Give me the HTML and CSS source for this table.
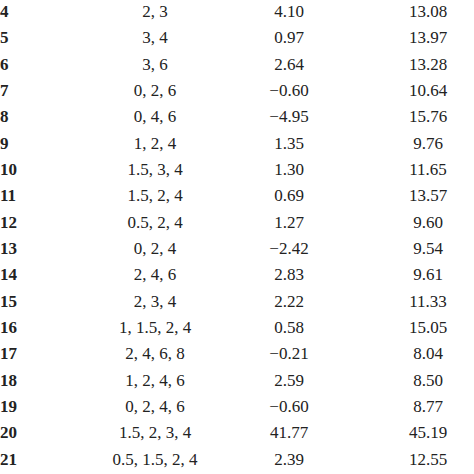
FILE: index.html
```html
<!DOCTYPE html>
<html>
<head>
<meta charset="utf-8">
<link rel="stylesheet" href="styles.css">
</head>
<body>
<div class="table">
  <div class="row"><span class="id">4</span><span class="c">2, 3</span><span class="c">4.10</span><span class="c">13.08</span></div>
  <div class="row"><span class="id">5</span><span class="c">3, 4</span><span class="c">0.97</span><span class="c">13.97</span></div>
  <div class="row"><span class="id">6</span><span class="c">3, 6</span><span class="c">2.64</span><span class="c">13.28</span></div>
  <div class="row"><span class="id">7</span><span class="c">0, 2, 6</span><span class="c">−0.60</span><span class="c">10.64</span></div>
  <div class="row"><span class="id">8</span><span class="c">0, 4, 6</span><span class="c">−4.95</span><span class="c">15.76</span></div>
  <div class="row"><span class="id">9</span><span class="c">1, 2, 4</span><span class="c">1.35</span><span class="c">9.76</span></div>
  <div class="row"><span class="id">10</span><span class="c">1.5, 3, 4</span><span class="c">1.30</span><span class="c">11.65</span></div>
  <div class="row"><span class="id">11</span><span class="c">1.5, 2, 4</span><span class="c">0.69</span><span class="c">13.57</span></div>
  <div class="row"><span class="id">12</span><span class="c">0.5, 2, 4</span><span class="c">1.27</span><span class="c">9.60</span></div>
  <div class="row"><span class="id">13</span><span class="c">0, 2, 4</span><span class="c">−2.42</span><span class="c">9.54</span></div>
  <div class="row"><span class="id">14</span><span class="c">2, 4, 6</span><span class="c">2.83</span><span class="c">9.61</span></div>
  <div class="row"><span class="id">15</span><span class="c">2, 3, 4</span><span class="c">2.22</span><span class="c">11.33</span></div>
  <div class="row"><span class="id">16</span><span class="c">1, 1.5, 2, 4</span><span class="c">0.58</span><span class="c">15.05</span></div>
  <div class="row"><span class="id">17</span><span class="c">2, 4, 6, 8</span><span class="c">−0.21</span><span class="c">8.04</span></div>
  <div class="row"><span class="id">18</span><span class="c">1, 2, 4, 6</span><span class="c">2.59</span><span class="c">8.50</span></div>
  <div class="row"><span class="id">19</span><span class="c">0, 2, 4, 6</span><span class="c">−0.60</span><span class="c">8.77</span></div>
  <div class="row"><span class="id">20</span><span class="c">1.5, 2, 3, 4</span><span class="c">41.77</span><span class="c">45.19</span></div>
  <div class="row"><span class="id">21</span><span class="c">0.5, 1.5, 2, 4</span><span class="c">2.39</span><span class="c">12.55</span></div>
</div>
</body>
</html>
```
FILE: styles.css
```css
html, body {
  margin: 0;
  padding: 0;
  background: #fff;
}
body {
  font-family: "Liberation Serif", "Times New Roman", serif;
  font-size: 17px;
  color: #222;
}
.table {
  margin-top: -1px;
}
.row {
  display: grid;
  grid-template-columns: 114px 82px 186px 92px;
  height: 26.34px;
  line-height: 26.34px;
  white-space: nowrap;
}
.id {
  font-weight: bold;
  text-align: left;
}
.c {
  text-align: center;
  display: flex;
  justify-content: center;
}
```
